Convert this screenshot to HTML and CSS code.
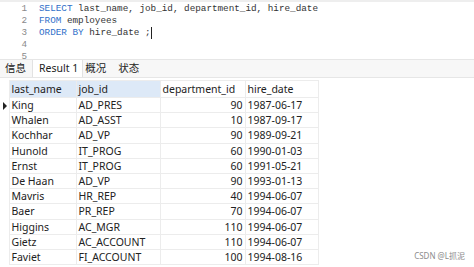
FILE: index.html
```html
<!DOCTYPE html>
<html lang="en">
<head>
    <meta charset="UTF-8">
    <title>Query Result</title>
    <link rel="stylesheet" href="styles.css">
</head>
<body>

<div class="editor">
    <div class="line"><span class="num">1</span><span class="kw">SELECT</span> last_name, job_id, department_id, hire_date</div>
    <div class="line"><span class="num">2</span><span class="kw">FROM</span> employees</div>
    <div class="line"><span class="num">3</span><span class="kw">ORDER BY</span> hire_date ;<span class="caret"></span></div>
    <div class="line"><span class="num">4</span></div>
    <div class="line"><span class="num">5</span></div>
</div>

<div class="tabs">
    <div class="tab first">信息</div>
    <div class="tab active">Result 1</div>
    <div class="tab">概况</div>
    <div class="tab">状态</div>
</div>

<table class="grid">
    <thead>
        <tr>
            <th class="marker"></th>
            <th class="hl c1">last_name</th>
            <th class="hl c2">job_id</th>
            <th class="c3">department_id</th>
            <th class="c4">hire_date</th>
        </tr>
    </thead>
    <tbody>
        <tr><td class="marker"><span class="arrow"></span></td><td>King</td><td>AD_PRES</td><td class="n">90</td><td>1987-06-17</td></tr>
        <tr><td class="marker"></td><td>Whalen</td><td>AD_ASST</td><td class="n">10</td><td>1987-09-17</td></tr>
        <tr><td class="marker"></td><td>Kochhar</td><td>AD_VP</td><td class="n">90</td><td>1989-09-21</td></tr>
        <tr><td class="marker"></td><td>Hunold</td><td>IT_PROG</td><td class="n">60</td><td>1990-01-03</td></tr>
        <tr><td class="marker"></td><td>Ernst</td><td>IT_PROG</td><td class="n">60</td><td>1991-05-21</td></tr>
        <tr><td class="marker"></td><td>De Haan</td><td>AD_VP</td><td class="n">90</td><td>1993-01-13</td></tr>
        <tr><td class="marker"></td><td>Mavris</td><td>HR_REP</td><td class="n">40</td><td>1994-06-07</td></tr>
        <tr><td class="marker"></td><td>Baer</td><td>PR_REP</td><td class="n">70</td><td>1994-06-07</td></tr>
        <tr><td class="marker"></td><td>Higgins</td><td>AC_MGR</td><td class="n">110</td><td>1994-06-07</td></tr>
        <tr><td class="marker"></td><td>Gietz</td><td>AC_ACCOUNT</td><td class="n">110</td><td>1994-06-07</td></tr>
        <tr><td class="marker"></td><td>Faviet</td><td>FI_ACCOUNT</td><td class="n">100</td><td>1994-08-16</td></tr>
    </tbody>
</table>

<div class="watermark">CSDN @L抓泥</div>

</body>
</html>
```

FILE: styles.css
```css
body {
    margin: 0;
    padding: 0;
    background-color: #fff;
    font-family: "Noto Sans", "Noto Sans CJK SC", sans-serif;
    color: #222;
    height: 267px;
    overflow: hidden;
    position: relative;
}
.editor {
    border-top: 2px solid #eeeeee;
    height: 56px;
    overflow: hidden;
    padding-top: 1px;
    font-family: "Liberation Mono", monospace;
    font-size: 9.3px;
    color: #333;
}
.line {
    height: 12px;
    line-height: 12px;
    white-space: pre;
}
.num {
    display: inline-block;
    width: 27px;
    padding-right: 12px;
    text-align: right;
    color: #8a8a8a;
}
.kw {
    color: #2f6fc9;
}
.caret {
    display: inline-block;
    width: 1px;
    height: 12px;
    background-color: #222;
    vertical-align: top;
}
.tabs {
    display: flex;
    height: 17px;
    border-top: 1px solid #e6e6e6;
    border-bottom: 1px solid #e6e6e6;
    background-color: #f7f7f7;
    font-size: 10.5px;
    line-height: 17px;
    padding-left: 5px;
}
.tab {
    margin-right: 12px;
    color: #222;
}
.tab.first {
    margin-right: 6px;
}
.tab.active {
    background-color: #fff;
    padding: 0 4px 0 6px;
    margin-right: 2px;
    border-left: 1px solid #e2e2e2;
    border-right: 1px solid #e2e2e2;
}
.grid {
    border-collapse: collapse;
    margin-top: 2px;
    font-size: 10.5px;
    table-layout: fixed;
}
.grid th, .grid td {
    height: 15.2px;
    padding: 0 2px;
    line-height: 14px;
    white-space: nowrap;
    text-align: left;
    font-weight: normal;
    border: 1px solid #ececec;
    box-sizing: border-box;
}
.grid th {
    height: 17px;
}
.grid .marker {
    width: 9px;
    padding: 0;
    border-left: none;
    border-top: none;
    border-bottom: none;
}
.grid .hl {
    background-color: #dde9f7;
}
.c1 { width: 67px; }
.c2 { width: 84px; }
.c3 { width: 85px; }
.c4 { width: 73px; }
.grid td.n {
    text-align: right;
}
.arrow {
    display: inline-block;
    width: 0;
    height: 0;
    margin-left: 3px;
    border-top: 4px solid transparent;
    border-bottom: 4px solid transparent;
    border-left: 4px solid #222;
    vertical-align: middle;
}
.watermark {
    position: absolute;
    right: 6px;
    bottom: 5px;
    padding: 1px 3px;
    background-color: rgba(255, 255, 255, 0.8);
    font-size: 8px;
    color: #8c8c8c;
}
```
